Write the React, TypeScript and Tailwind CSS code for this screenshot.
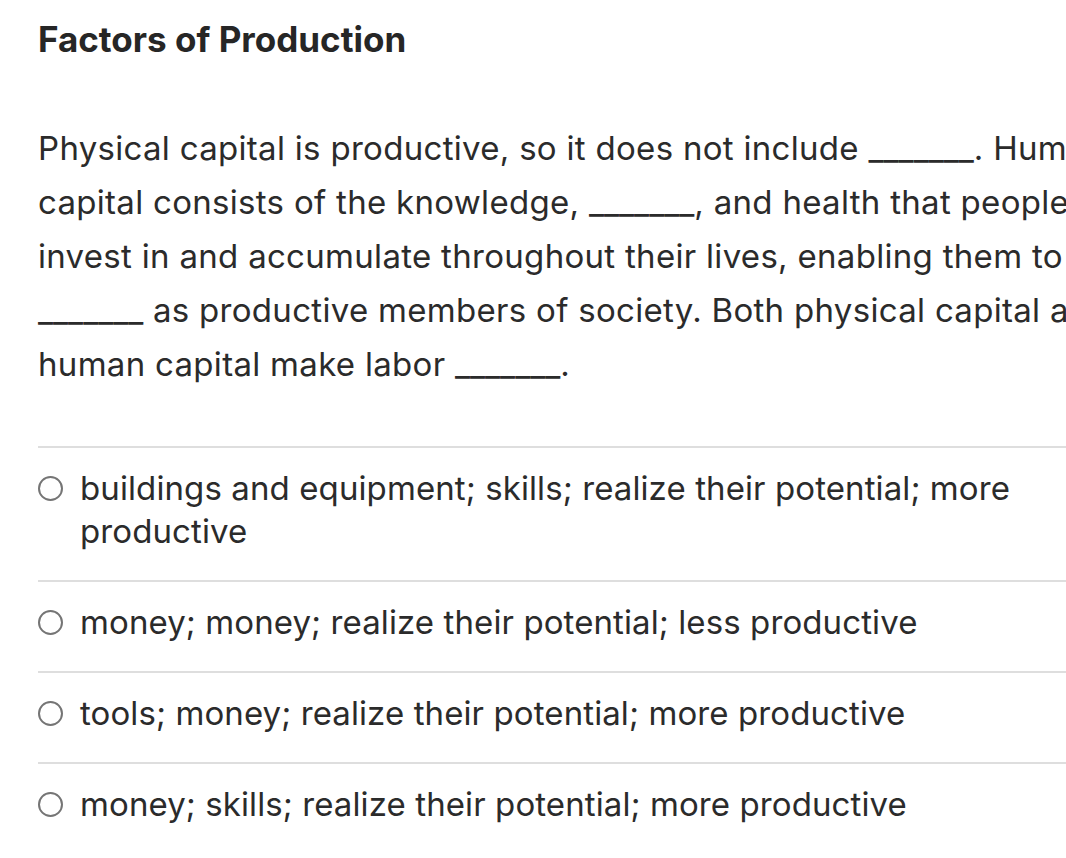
import React from "react";

const options = [
  "buildings and equipment; skills; realize their potential; more productive",
  "money; money; realize their potential; less productive",
  "tools; money; realize their potential; more productive",
  "money; skills; realize their potential; more productive",
];

const Blank = () => <span className="tracking-normal">_______</span>;

export default function App() {
  return (
    <div className="w-[1066px] h-[858px] overflow-hidden bg-white text-[#2b2b2b] font-['Inter',sans-serif]">
      <div className="w-[1112px] pl-[38px] pt-[16px]">
        <h1 className="text-[35px] font-bold leading-[46px] text-[#262626]">Factors of Production</h1>
        <p className="mt-[59px] text-[33px] leading-[54px] tracking-[0.3px]">
          Physical capital is productive, so it does not include <Blank />. Human capital consists of the
          knowledge, <Blank />, and health that people invest in and accumulate throughout their lives,
          enabling them to <Blank /> as productive members of society. Both physical capital and human
          capital make labor <Blank />.
        </p>
        <div className="mt-[55px]">
          {options.map((o, i) => (
            <label key={i} className="flex items-start border-t-2 border-[#dedede] pt-[19px] pb-[27px] cursor-pointer">
              <span className="mt-[9px] w-[25px] h-[25px] shrink-0 rounded-full border-2 border-[#757575] bg-white" />
              <span className="ml-[17px] text-[33px] leading-[43px] tracking-[0.1px]">{o}</span>
            </label>
          ))}
        </div>
      </div>
    </div>
  );
}
